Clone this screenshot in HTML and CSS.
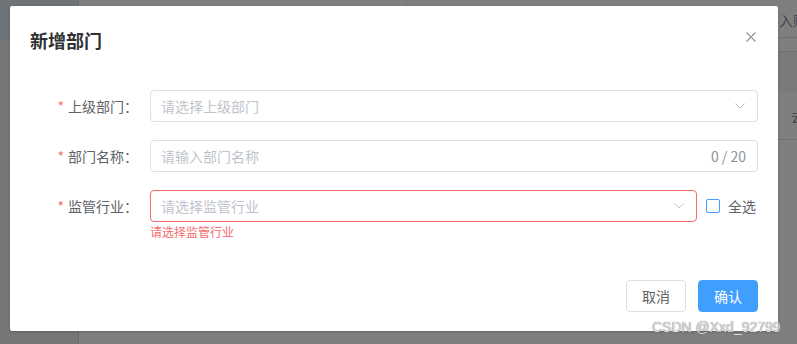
FILE: index.html
```html
<!DOCTYPE html>
<html lang="zh-CN">
<head>
<meta charset="utf-8">
<title>新增部门</title>
<link rel="stylesheet" href="styles.css">
</head>
<body>
<div class="page">
  <aside class="side"><div class="side-top"></div></aside>
  <main class="main">
    <div class="toolbar">
      <div class="tab"></div>
      <div class="spacer"></div>
      <span class="import">导入账单</span>
    </div>
    <div class="strip"></div>
    <div class="thead"></div>
    <div class="trow"><span class="cell">去</span></div>
  </main>
</div>

<div class="dialog">
  <div class="dialog-header">
    <h2 class="dialog-title">新增部门</h2>
  </div>
  <button class="close" aria-label="关闭">
    <svg width="10" height="10" viewBox="0 0 10 10"><path d="M0.5 0.5L9.5 9.5M9.5 0.5L0.5 9.5" stroke="#909399" stroke-width="1.1" fill="none"/></svg>
  </button>
  <div class="dialog-body">
    <div class="form-item">
      <label class="label"><span class="req">*</span>上级部门：</label>
      <div class="control">
        <div class="input select">
          <span class="placeholder">请选择上级部门</span>
          <svg class="chev" width="10" height="6" viewBox="0 0 10 6"><path d="M0.5 0.5L5 5L9.5 0.5" stroke="#c0c4cc" stroke-width="1" fill="none"/></svg>
        </div>
      </div>
    </div>
    <div class="form-item">
      <label class="label"><span class="req">*</span>部门名称：</label>
      <div class="control">
        <div class="input">
          <span class="placeholder">请输入部门名称</span>
          <span class="count">0 / 20</span>
        </div>
      </div>
    </div>
    <div class="form-item last">
      <label class="label"><span class="req">*</span>监管行业：</label>
      <div class="control">
        <div class="control-row">
          <div class="input select error wide">
            <span class="placeholder">请选择监管行业</span>
            <svg class="chev" width="10" height="6" viewBox="0 0 10 6"><path d="M0.5 0.5L5 5L9.5 0.5" stroke="#c0c4cc" stroke-width="1" fill="none"/></svg>
          </div>
          <label class="checkbox"><span class="check-box"></span><span class="check-label">全选</span></label>
        </div>
        <div class="error-msg">请选择监管行业</div>
      </div>
    </div>
  </div>
  <div class="dialog-footer">
    <button class="btn">取消</button>
    <button class="btn primary">确认</button>
  </div>
</div>

<div class="watermark">CSDN @Xxd_92799</div>
</body>
</html>
```

FILE: styles.css
```css
html, body {
  margin: 0;
  padding: 0;
}
body {
  width: 797px;
  height: 344px;
  overflow: hidden;
  position: relative;
  background: #808080;
  font-family: "Noto Sans CJK SC", "Noto Sans", "Liberation Sans", sans-serif;
}
.page {
  display: flex;
  height: 344px;
}
.side {
  width: 78px;
  flex: none;
  background: #767676;
  border-right: 1px solid #6a6a6a;
}
.side-top {
  height: 40px;
  background: #6e7378;
}
.main {
  flex: 1;
  overflow: hidden;
  display: flex;
  flex-direction: column;
  background: #7f7f7f;
}
.toolbar {
  height: 37px;
  display: flex;
  border-bottom: 1px solid #6f6f6f;
}
.tab {
  width: 327px;
  border-right: 1px solid #737373;
}
.spacer {
  flex: 1;
}
.import {
  font-size: 14px;
  line-height: 16px;
  padding-top: 12px;
  color: #454545;
  margin-right: -24px;
  white-space: nowrap;
}
.strip {
  height: 13px;
  border-bottom: 1px solid #6f6f6f;
}
.thead {
  height: 40px;
  background: #7a7a7a;
}
.trow {
  height: 47px;
  border-bottom: 1px solid #717171;
  display: flex;
  justify-content: flex-end;
  align-items: center;
}
.cell {
  font-size: 14px;
  color: #454545;
  margin-right: -8px;
}

.dialog {
  position: absolute;
  left: 10px;
  top: 6px;
  width: 768px;
  background: #fff;
  border-radius: 2px;
  box-shadow: 0 1px 3px rgba(0, 0, 0, 0.2);
}
.dialog-header {
  padding: 22px 20px 10px;
}
.dialog-title {
  display: block;
  margin: 0;
  font-size: 18px;
  line-height: 24px;
  height: 24px;
  color: #303133;
  font-weight: bold;
}
.close {
  position: absolute;
  top: 26px;
  right: 22px;
  width: 10px;
  height: 10px;
  padding: 0;
  border: none;
  background: none;
  display: flex;
}
.dialog-body {
  padding: 28px 20px 30px;
}
.form-item {
  display: flex;
  margin-bottom: 18px;
}
.form-item.last {
  margin-bottom: 0;
}
.label {
  width: 120px;
  flex: none;
  height: 32px;
  box-sizing: border-box;
  padding-right: 12px;
  text-align: right;
  font-size: 14px;
  line-height: 32px;
  color: #606266;
}
.req {
  color: #f56c6c;
  margin-right: 4px;
}
.control {
  flex: 1;
  min-width: 0;
}
.control-row {
  display: flex;
  align-items: center;
}
.input {
  height: 32px;
  box-sizing: border-box;
  border: 1px solid #dcdfe6;
  border-radius: 4px;
  display: flex;
  align-items: center;
  padding: 0 11px 0 10px;
  font-size: 14px;
}
.input.select {
  padding-right: 12px;
}
.input.error {
  border-color: #f56c6c;
}
.input.wide {
  width: 547px;
  flex: none;
}
.placeholder {
  flex: 1;
  color: #c0c4cc;
}
.count {
  color: #909399;
  font-size: 14px;
}
.chev {
  display: block;
}
.checkbox {
  display: flex;
  align-items: center;
  margin-left: 9px;
}
.check-box {
  width: 14px;
  height: 14px;
  box-sizing: border-box;
  border: 1px solid #409eff;
  border-radius: 2px;
  background: #fff;
}
.check-label {
  padding-left: 8px;
  font-size: 14px;
  color: #606266;
}
.error-msg {
  padding-top: 4px;
  font-size: 12px;
  line-height: 12px;
  height: 12px;
  color: #f56c6c;
}
.dialog-footer {
  padding: 12px 20px 19px;
  display: flex;
  justify-content: flex-end;
  gap: 12px;
}
.btn {
  height: 32px;
  padding: 0 15px;
  box-sizing: border-box;
  border: 1px solid #dcdfe6;
  border-radius: 4px;
  background: #fff;
  color: #606266;
  font-family: inherit;
  font-size: 14px;
  line-height: 1;
}
.btn.primary {
  background: #409eff;
  border-color: #409eff;
  color: #fff;
}
.watermark {
  position: absolute;
  left: 652px;
  top: 319px;
  font-family: "Liberation Sans", Arial, sans-serif;
  font-size: 14px;
  line-height: 16px;
  color: #dcdcdc;
  text-shadow: 0 0 1px #5a5a5a;
  white-space: nowrap;
}
```
